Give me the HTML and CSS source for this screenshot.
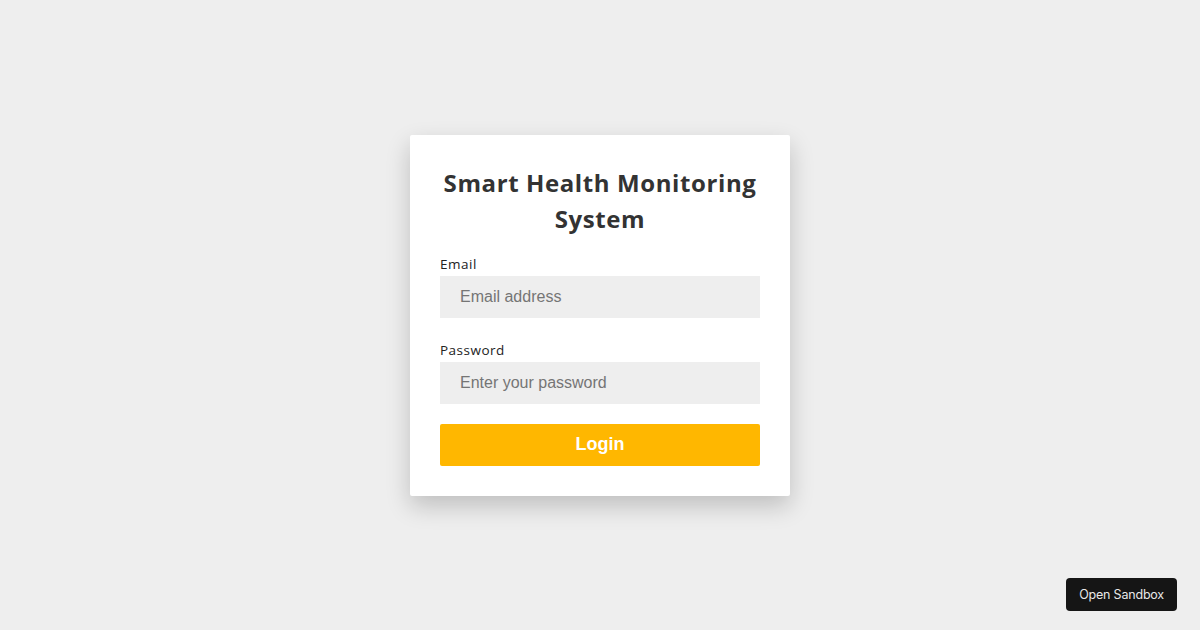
FILE: index.html
```
<!DOCTYPE html>
<html lang="en">
<head>
    <meta charset="UTF-8">
    <meta name="viewport" content="width=device-width, initial-scale=1.0">
    <title>Smart Health Monitoring System</title>
    <link rel="stylesheet" href="styles.css">
</head>
<body>
    <div class="login-box">
        <h1>Smart Health Monitoring System</h1>
        <form id="login-form">
            <div class="form-group">
                <label for="email">Email</label>
                <input type="email" id="email" name="email" placeholder="Email address" required>
            </div>
            <div class="form-group">
                <label for="password">Password</label>
                <input type="password" id="password" name="password" placeholder="Enter your password" required>
            </div>
            <button type="submit">Login</button>
        </form>
    </div>

    <a class="sandbox-btn" href="#">Open Sandbox</a>
</body>
</html>
```

FILE: styles.css
```
* {
    box-sizing: border-box;
}
html, body {
    height: 100%;
}
body {
    margin: 0;
    font-family: "Open Sans", sans-serif;
    background-color: #eeeeee;
    display: flex;
    align-items: center;
    justify-content: center;
}
.login-box {
    width: 380px;
    padding: 30px;
    background: #fff;
    border-radius: 2px;
    box-shadow: 0 10px 25px rgba(0, 0, 0, 0.2);
}
h1 {
    margin: 0 0 19px;
    font-size: 24px;
    line-height: 36px;
    font-weight: 700;
    letter-spacing: 0.6px;
    text-align: center;
    color: #333;
}
.form-group {
    margin-bottom: 24px;
}
label {
    display: block;
    margin-bottom: 3px;
    font-size: 13.5px;
    line-height: 17px;
    color: #222;
    letter-spacing: 0.5px;
}
input[type="email"], input[type="password"] {
    display: block;
    width: 100%;
    height: 42px;
    padding: 0 20px;
    border: none;
    border-radius: 0;
    background-color: #eeeeee;
    font-family: "Liberation Sans", Arial, sans-serif;
    font-size: 16px;
    color: #333;
    outline: none;
}
input::placeholder {
    color: #757575;
}
button {
    display: block;
    width: 100%;
    height: 42px;
    margin-top: -4px;
    border: none;
    border-radius: 2px;
    background-color: #ffb700;
    color: #fff;
    font-family: "Liberation Sans", Arial, sans-serif;
    font-size: 18px;
    font-weight: 700;
    cursor: pointer;
}
.sandbox-btn {
    position: fixed;
    right: 23px;
    bottom: 19px;
    padding: 0 13px;
    height: 33px;
    line-height: 33px;
    background: #151515;
    border-radius: 4px;
    color: #e8e8e8;
    font-family: Inter, sans-serif;
    font-size: 12.5px;
    letter-spacing: -0.2px;
    text-decoration: none;
}
```
